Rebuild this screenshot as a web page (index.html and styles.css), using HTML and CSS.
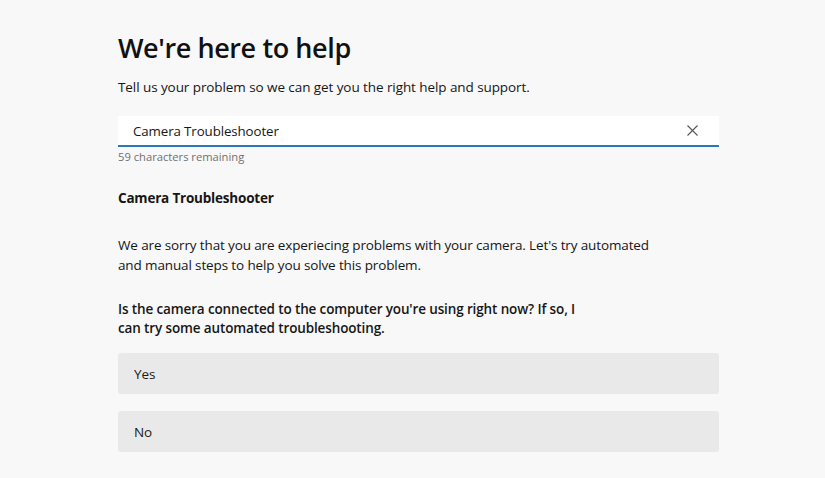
FILE: index.html
```html
<!DOCTYPE html>
<html lang="en">
<head>
<meta charset="utf-8">
<title>Get Help</title>
<link rel="stylesheet" href="styles.css">
</head>
<body>
<main class="page">
  <h1 class="title">We're here to help</h1>
  <p class="subtitle">Tell us your problem so we can get you the right help and support.</p>
  <div class="search">
    <span class="search-text">Camera Troubleshooter</span>
    <svg class="clear" width="11" height="11" viewBox="0 0 11 11" aria-hidden="true"><path d="M0.5 0.5 L10.5 10.5 M10.5 0.5 L0.5 10.5" stroke="#555" stroke-width="1.1" fill="none"/></svg>
  </div>
  <p class="remaining">59 characters remaining</p>
  <h2 class="section-title">Camera Troubleshooter</h2>
  <p class="body">We are sorry that you are experiecing problems with your camera. Let's try automated and manual steps to help you solve this problem.</p>
  <p class="question">Is the camera connected to the computer you're using right now? If so, I can try some automated troubleshooting.</p>
  <div class="options">
    <button class="option">Yes</button>
    <button class="option">No</button>
  </div>
</main>
</body>
</html>
```
FILE: styles.css
```css
html, body {
  margin: 0;
  padding: 0;
  background: #f8f8f8;
}
body {
  font-family: "Open Sans", "Noto Sans", sans-serif;
  color: #161616;
}
.page {
  width: 601px;
  margin-left: 118px;
  padding-top: 30px;
  display: flex;
  flex-direction: column;
}
.title {
  margin: 0;
  font-size: 27px;
  font-weight: 600;
  line-height: 36px;
  letter-spacing: -0.4px;
  color: #111;
}
.subtitle {
  margin: 11px 0 0;
  font-size: 13.5px;
  letter-spacing: -0.08px;
  line-height: 20px;
}
.search {
  margin-top: 19px;
  height: 29px;
  background: #fff;
  border-bottom: 2px solid #2a78b8;
  display: flex;
  align-items: center;
  justify-content: space-between;
  padding: 0 21px 0 15px;
  box-sizing: content-box;
}
.search-text {
  font-size: 13.3px;
  letter-spacing: -0.1px;
}
.remaining {
  margin: 2px 0 0;
  font-size: 11.2px;
  line-height: 16px;
  color: #707070;
}
.section-title {
  margin: 23px 0 0;
  font-size: 13.5px;
  font-weight: 700;
  letter-spacing: -0.2px;
  line-height: 20px;
}
.body {
  margin: 27px 0 0;
  width: 545px;
  font-size: 13.5px;
  letter-spacing: -0.13px;
  line-height: 20px;
}
.question {
  margin: 25px 0 0;
  width: 470px;
  font-size: 13.5px;
  font-weight: 600;
  letter-spacing: -0.13px;
  line-height: 19px;
}
.options {
  margin-top: 15px;
  display: flex;
  flex-direction: column;
  gap: 17px;
}
.option {
  height: 41px;
  border: none;
  border-radius: 3px;
  background: #e9e9e9;
  text-align: left;
  padding: 0 16px;
  font-family: inherit;
  font-size: 13.5px;
  letter-spacing: -0.08px;
  color: #1a1a1a;
}
```
